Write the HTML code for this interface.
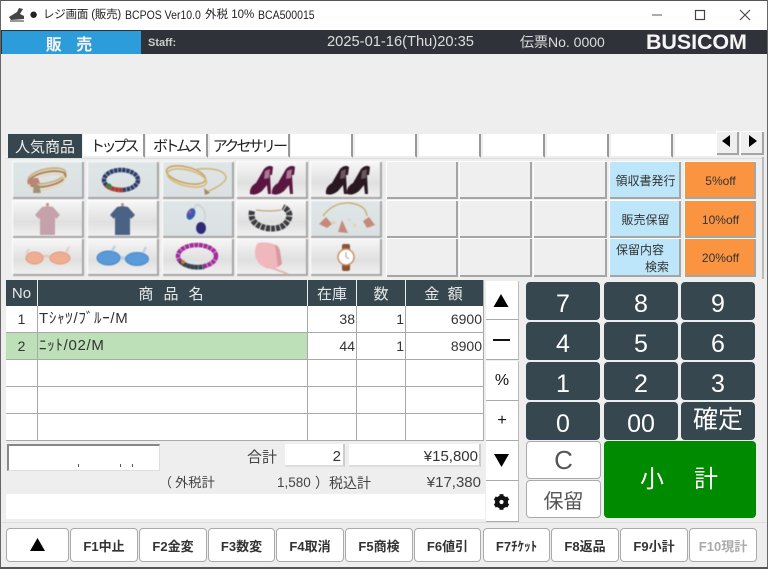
<!DOCTYPE html>
<html lang="ja"><head><meta charset="utf-8"><title>レジ画面</title>
<style>
html,body{margin:0;padding:0}
body{width:768px;height:569px;overflow:hidden;position:relative;background:#eee;font-family:"Liberation Sans","Noto Sans CJK JP",sans-serif;color:#333}
div{position:absolute;box-sizing:border-box;white-space:nowrap}
.c{display:flex;align-items:center;justify-content:center}
.tab{top:134px;height:24px;background:#fff;border-right:2px solid #999;border-bottom:2px solid #eee;font-size:15px;color:#222}
.gb{background:#efefef;border:1px solid #fff;border-width:1px 0 0 1px;box-shadow:inset -2px -2px 0 #a5a5a5}
.bl{background:#bde6fa;border-top:1px solid #fff;border-left:1px solid #fff;box-shadow:inset -2px -2px 0 #a5a5a5;font-size:12px;color:#333}
.or{background:#fb9440;border-top:1px solid #fff;border-left:1px solid #fff;box-shadow:inset -2px -2px 0 #a5a5a5;font-size:12px;color:#333}
.th{top:280px;height:26px;background:#37474f;color:#e8e8e8;font-size:15px}
.ln{background:#a9a9a9}
.cell{font-size:14px;color:#333;height:26px;line-height:26px}
.nm{font-size:15px;letter-spacing:.7px}
.r{text-align:right}
.sb{left:486px;width:33px;background:#fff;border-right:1px solid #bbb;border-bottom:1px solid #aaa;color:#111}
.np{background:#37474f;border-radius:4px;color:#fff;font-size:25px;line-height:44px;text-align:center;height:38px;width:74px}
.wb{background:#fff;border:1px solid #aaa;border-radius:4px;color:#555}
.fk{top:528px;height:34px;background:#fff;border:1px solid #aaa;border-radius:4px;font-size:13px;font-weight:bold;color:#333}
.t{top:7px;font-size:12px;line-height:16px;color:#222;transform-origin:left center}
</style></head><body>
<div style="left:0;top:0;width:768px;height:1px;background:#555"></div>
<div style="left:0;top:0;width:1px;height:569px;background:#666"></div>
<div style="left:767px;top:0;width:1px;height:569px;background:#666"></div>
<div style="left:1px;top:1px;width:766px;height:29px;background:#fff"></div>
<svg style="position:absolute;left:8px;top:7px" width="17" height="16" viewBox="0 0 17 16"><path d="M1 10L9 5 11 1 15 2 12 7 16 9 16 12 3 13z" fill="#444"/><path d="M2 13h14v2H2z" fill="#999"/></svg>
<div class="t" style="left:29px;font-size:15px">●</div>
<div class="t" style="left:43px;font-size:11.500px;letter-spacing:-.2px">レジ画面 (販売)</div>
<div class="t" style="left:125px;transform:scaleX(.875)">BCPOS Ver10.0</div>
<div class="t" style="left:205px;font-size:11.500px">外税 10%</div>
<div class="t" style="left:258px;transform:scaleX(.875)">BCA500015</div>
<svg style="position:absolute;left:650px;top:5px" width="110" height="18" viewBox="0 0 110 18" fill="none" stroke="#444"><path d="M2 10h10" stroke="#888" stroke-width="1.4"/><rect x="45.500" y="5.500" width="9" height="9" stroke-width="1.2"/><path d="M90 5l10 10M100 5l-10 10" stroke-width="1.1"/></svg>

<div style="left:1px;top:30px;width:766px;height:24px;background:#2f3239"></div>
<div class="c" style="left:2px;top:31px;width:139px;height:23px;background:#2d9cdb;color:#f4f4f4;font-size:16px;font-weight:bold;letter-spacing:5px">販 売</div>
<div style="left:148px;top:36px;font-size:11px;line-height:14px;color:#ccc;font-weight:bold">Staff:</div>
<div style="left:327px;top:34px;font-size:14.700px;line-height:17px;color:#ddd">2025-01-16(Thu)20:35</div>
<div style="left:520px;top:34px;font-size:14px;line-height:17px;color:#ddd">伝票No. 0000</div>
<div style="left:646px;top:30px;font-size:21.500px;line-height:24px;font-weight:bold;color:#f5f5f5;letter-spacing:-.1px">BUSICOM</div>

<div class="c tab" style="left:8px;width:74px;background:#37474f;color:#eee;border:0;height:25px">人気商品</div>
<div class="c tab" style="left:83px;width:62px;letter-spacing:-3.500px">トップス</div>
<div class="c tab" style="left:146px;width:62px;letter-spacing:-3.500px">ボトムス</div>
<div class="c tab" style="left:210px;width:80px;letter-spacing:-2.800px">アクセサリー</div>
<div class="tab" style="left:291px;width:62px"></div>
<div class="tab" style="left:355px;width:62px"></div>
<div class="tab" style="left:419px;width:62px"></div>
<div class="tab" style="left:483px;width:62px"></div>
<div class="tab" style="left:547px;width:62px"></div>
<div class="tab" style="left:611px;width:62px"></div>
<div class="tab" style="left:675px;width:42px;border-right:0"></div>
<div class="gb" style="left:716px;top:131px;width:23px;height:24px"></div>
<div class="gb" style="left:740px;top:131px;width:24px;height:24px"></div>
<svg style="position:absolute;left:716px;top:131px" width="48" height="24"><path d="M14 4v12l-8-6zM33 4v12l8-6z" fill="#000"/></svg>
<div style="left:6px;top:158px;width:756px;height:1px;background:#ddd"></div>
<div style="left:762px;top:157px;width:2px;height:122px;background:#bbb"></div>

<svg style="position:absolute;left:0;top:0;filter:blur(.4px)" width="768" height="569">
<defs>
<linearGradient id="a" x1="0" y1="0" x2="0" y2="1"><stop offset="0" stop-color="#dfe6e7"/><stop offset="1" stop-color="#dbe1e2"/></linearGradient>
<linearGradient id="b" x1="0" y1="0" x2="0" y2="1"><stop offset="0" stop-color="#f6f6f6"/><stop offset=".6" stop-color="#e0e0e0"/><stop offset="1" stop-color="#f0f0f0"/></linearGradient>
<g id="ca"><rect width="72" height="38" fill="#fff"/><rect x="1" y="1" width="71" height="37" fill="#a5a5a5"/><rect x="1" y="1" width="69" height="35" fill="url(#a)"/></g>
<g id="cb"><rect width="72" height="38" fill="#fff"/><rect x="1" y="1" width="71" height="37" fill="#a5a5a5"/><rect x="1" y="1" width="69" height="35" fill="url(#b)"/></g>
<path id="sh" d="M14 33Q13 26 20 22L28 8Q33 3 37 6L36 14 34 14 35 33H32L31 24 26 30Q20 35 14 33Z"/>
<path id="ts" d="M30 7L35.500 6 41 7 48 15 44 19 43 17V35H28V17L27 19 23 15Z"/>
</defs>
<!-- row 1 -->
<g transform="translate(12,161)"><use href="#ca"/><g fill="none" stroke-width="1.800"><ellipse cx="35" cy="15" rx="19" ry="7" transform="rotate(-12 35 15)" stroke="#cfae78"/><ellipse cx="35" cy="18" rx="19" ry="7" transform="rotate(-12 35 18)" stroke="#a87a58"/><ellipse cx="35" cy="21" rx="18" ry="7" transform="rotate(-12 35 21)" stroke="#e6d8b8"/></g><path d="M15 19l7-2 4 0 2 5-4 1-1 2-6-2z" fill="#bb8474"/><path d="M22 23l5 1 2 8-8 0z" fill="#a09078"/></g>
<g transform="translate(87,161)"><use href="#ca"/><ellipse cx="34" cy="19" rx="17" ry="10" fill="none" stroke="#2b3c68" stroke-width="4.500" stroke-dasharray="3.500 .6"/><path d="M19 24q5 5 17 5" fill="none" stroke="#c8452e" stroke-width="4.500" stroke-dasharray="3.500 .6"/><circle cx="22" cy="25" r="2.500" fill="#2a8a4a"/></g>
<g transform="translate(162,161)"><use href="#ca"/><g fill="none" stroke="#c9a25f" stroke-width="1.600"><ellipse cx="24" cy="14" rx="20" ry="8" transform="rotate(14 24 14)"/><ellipse cx="25" cy="17" rx="20" ry="8" transform="rotate(14 25 17)" stroke="#d8b878"/><path d="M35 8q26-2 29 8 1 6-19 15" stroke="#d3b67a"/></g><path d="M42 27l6 5-5 2z" fill="#a08b5f"/></g>
<g transform="translate(236,161)"><use href="#cb"/><use href="#sh" fill="#5a1640"/><use href="#sh" x="22" fill="#5a1640"/><path d="M29 10l5-2-1 9-5 1zM51 10l5-2-1 9-5 1z" fill="#a87a98"/></g>
<g transform="translate(310,161)"><use href="#cb"/><use href="#sh" x="2" fill="#2a1820"/><use href="#sh" x="23" fill="#2a1820"/><path d="M31 10l5-2-1 9-5 1zM52 10l5-2-1 9-5 1z" fill="#6a5860"/></g>
<!-- row 2 -->
<g transform="translate(12,200)"><use href="#cb"/><use href="#ts" fill="#c4a1ab"/><circle cx="35.500" cy="4.500" r="1.500" fill="#c09070"/></g>
<g transform="translate(87,200)"><use href="#cb"/><use href="#ts" fill="#4a6283"/><circle cx="35.500" cy="4.500" r="1.500" fill="#c09070"/></g>
<g transform="translate(162,200)"><use href="#ca"/><ellipse cx="29" cy="14" rx="4" ry="6" fill="#3a5ab0" transform="rotate(25 29 14)"/><ellipse cx="39" cy="28" rx="5" ry="6" fill="#302878"/><circle cx="28" cy="12" r="1.500" fill="#b050a0"/><path d="M32 9q2-6 5-4M42 21q3-6-1-12-3-5-5-3" fill="none" stroke="#c4c8cc"/></g>
<g transform="translate(236,200)"><use href="#cb"/><path d="M16 11Q13 24 30 28 48 31 53 18 55 11 47 7" fill="none" stroke="#3c3c40" stroke-width="6" stroke-dasharray="4 1"/><path d="M20 10q14 2 25 0" stroke="#b8945a" fill="none"/></g>
<g transform="translate(310,200)"><use href="#ca"/><path d="M13 16q10-14 27-13 16 2 17 13" fill="none" stroke="#c9a25f" stroke-width="1.200"/><path d="M9 24l7-7 6 7-5 4zM28 32l4-12 6 13zM53 21l6-4 6 8-8 3z" fill="#c78a78"/><path d="M22 20l5 3-5 1zM43 23l4 2-3 3zM38 18l3 2-2 2z" fill="#e0d0b0"/></g>
<!-- row 3 -->
<g transform="translate(12,238)"><use href="#cb"/><path d="M30 19q4-2 9 0" stroke="#e8c8bc" stroke-width="2.500" fill="none"/><ellipse cx="22.500" cy="20" rx="8.500" ry="6" fill="#efae92" stroke="#e09a80"/><ellipse cx="48" cy="20" rx="10" ry="6" fill="#efae92" stroke="#e09a80"/><path d="M14 16l3-5M54 15l3-6" stroke="#e8d0c8" stroke-width="2.500"/></g>
<g transform="translate(87,238)"><use href="#cb"/><path d="M32 19q4 1 7 2" stroke="#b8cfe8" stroke-width="3" fill="none"/><ellipse cx="21.500" cy="20" rx="11.500" ry="7" fill="#5a9ad8" stroke="#4a86c8"/><ellipse cx="50" cy="21" rx="11.500" ry="6.500" fill="#5a9ad8" stroke="#4a86c8"/><path d="M56 15l3-6M25 13l3-5" stroke="#b8cfe8" stroke-width="2.500"/></g>
<g transform="translate(162,238)"><use href="#cb"/><ellipse cx="35" cy="18" rx="19" ry="11" fill="none" stroke="#a32b9a" stroke-width="4.500" stroke-dasharray="4 .6"/><path d="M18 23q8 8 24 6" fill="none" stroke="#2a4a48" stroke-width="4.500" stroke-dasharray="3.500 .6"/><circle cx="21" cy="24" r="2" fill="#c87a30"/></g>
<g transform="translate(236,238)"><use href="#cb"/><path d="M22 5Q32 3 42 8L45 24Q44 30 36 31L30 30Q20 26 19 16 19 8 22 5Z" fill="#f0b8bc"/><path d="M39 7q4 1 5 6l2 13-4 3z" fill="#d89aa0"/><path d="M36 30l16 6" stroke="#e8b4b0" stroke-width="2"/></g>
<g transform="translate(310,238)"><use href="#cb"/><rect x="32" y="6" width="8" height="27" rx="2" fill="#8a5238"/><circle cx="36" cy="19" r="8" fill="#fff" stroke="#c89060" stroke-width="1.500"/><path d="M36 19v-5M36 19l3 2" stroke="#777" stroke-width=".7"/></g>
</svg>
<!-- empty buttons -->
<div class="gb" style="left:386px;top:161px;width:72px;height:38px"></div>
<div class="gb" style="left:459px;top:161px;width:73px;height:38px"></div>
<div class="gb" style="left:533px;top:161px;width:74px;height:38px"></div>
<div class="gb" style="left:386px;top:200px;width:72px;height:38px"></div>
<div class="gb" style="left:459px;top:200px;width:73px;height:38px"></div>
<div class="gb" style="left:533px;top:200px;width:74px;height:38px"></div>
<div class="gb" style="left:386px;top:238px;width:72px;height:39px"></div>
<div class="gb" style="left:459px;top:238px;width:73px;height:39px"></div>
<div class="gb" style="left:533px;top:238px;width:74px;height:39px"></div>
<div class="bl c" style="left:609px;top:161px;width:72px;height:38px">領収書発行</div>
<div class="bl c" style="left:609px;top:200px;width:72px;height:38px">販売保留</div>
<div class="bl" style="left:609px;top:238px;width:72px;height:39px"><div style="left:6px;top:3px;line-height:16px">保留内容</div><div style="left:35px;top:20px;line-height:16px">検索</div></div>
<div class="or c" style="left:684px;top:161px;width:72px;height:38px">5%off</div>
<div class="or c" style="left:684px;top:200px;width:72px;height:38px">10%off</div>
<div class="or c" style="left:684px;top:238px;width:72px;height:39px">20%off</div>

<!-- table -->
<div style="left:6px;top:306px;width:477px;height:135px;background:#fff"></div>
<div style="left:6px;top:333px;width:301px;height:26px;background:#bde0b9"></div>
<div class="th c" style="left:6px;width:31px">No</div>
<div class="th c" style="left:38px;width:269px;letter-spacing:3px">商 品 名</div>
<div class="th c" style="left:308px;width:48px">在庫</div>
<div class="th c" style="left:357px;width:48px">数</div>
<div class="th c" style="left:406px;width:77px;letter-spacing:2px">金 額</div>
<div class="ln" style="left:6px;top:332px;width:477px;height:1px"></div>
<div class="ln" style="left:6px;top:359px;width:477px;height:1px"></div>
<div class="ln" style="left:6px;top:386px;width:477px;height:1px"></div>
<div class="ln" style="left:6px;top:413px;width:477px;height:1px"></div>
<div class="ln" style="left:6px;top:440px;width:477px;height:1px"></div>
<div class="ln" style="left:37px;top:306px;width:1px;height:135px"></div>
<div class="ln" style="left:307px;top:306px;width:1px;height:135px"></div>
<div class="ln" style="left:356px;top:306px;width:1px;height:135px"></div>
<div class="ln" style="left:405px;top:306px;width:1px;height:135px"></div>
<div class="ln" style="left:483px;top:280px;width:1px;height:161px"></div>
<div class="cell" style="left:6px;top:306px;width:31px;text-align:center">1</div>
<div class="cell nm" style="left:39px;top:306px">Tｼｬﾂ/ﾌﾞﾙｰ/M</div>
<div class="cell r" style="left:308px;top:306px;width:47px">38</div>
<div class="cell r" style="left:357px;top:306px;width:47px">1</div>
<div class="cell r" style="left:406px;top:306px;width:76px">6900</div>
<div class="cell" style="left:6px;top:333px;width:31px;text-align:center">2</div>
<div class="cell nm" style="left:39px;top:333px">ﾆｯﾄ/02/M</div>
<div class="cell r" style="left:308px;top:333px;width:47px">44</div>
<div class="cell r" style="left:357px;top:333px;width:47px">1</div>
<div class="cell r" style="left:406px;top:333px;width:76px">8900</div>

<!-- side buttons -->
<div class="sb" style="top:281px;height:39px"></div>
<div class="sb" style="top:320px;height:40px"></div>
<div class="sb c" style="top:361px;height:40px;font-size:16px">%</div>
<div class="sb c" style="top:401px;height:40px;font-size:16px">+</div>
<div class="sb" style="top:441px;height:40px"></div>
<div class="sb" style="top:481px;height:41px"></div>
<svg style="position:absolute;left:486px;top:281px" width="33" height="241"><path d="M7.500 26L15 13 22.500 26z" fill="#000"/><path d="M7 59h17" stroke="#111" stroke-width="2"/><path d="M8 173L15.500 186 23 173z" fill="#000"/><g transform="translate(15.500,221)"><circle r="4.300" fill="none" stroke="#111" stroke-width="4.400"/><g fill="#111"><rect x="-2" y="-7.800" width="4" height="3.500"/><rect x="-2" y="-7.800" width="4" height="3.500" transform="rotate(60)"/><rect x="-2" y="-7.800" width="4" height="3.500" transform="rotate(120)"/><rect x="-2" y="-7.800" width="4" height="3.500" transform="rotate(180)"/><rect x="-2" y="-7.800" width="4" height="3.500" transform="rotate(240)"/><rect x="-2" y="-7.800" width="4" height="3.500" transform="rotate(300)"/></g></g></svg>

<!-- numpad -->
<div class="np" style="left:526px;top:282px">7</div><div class="np" style="left:604px;top:282px">8</div><div class="np" style="left:681px;top:282px">9</div>
<div class="np" style="left:526px;top:322px">4</div><div class="np" style="left:604px;top:322px">5</div><div class="np" style="left:681px;top:322px">6</div>
<div class="np" style="left:526px;top:362px">1</div><div class="np" style="left:604px;top:362px">2</div><div class="np" style="left:681px;top:362px">3</div>
<div class="np" style="left:526px;top:402px">0</div><div class="np" style="left:604px;top:402px">00</div><div class="np" style="left:681px;top:402px;font-size:25px;line-height:36px">確定</div>
<div class="wb c" style="left:526px;top:441px;width:75px;height:38px;font-size:26px">C</div>
<div class="wb c" style="left:526px;top:480px;width:75px;height:38px;font-size:20px">保留</div>
<div style="left:604px;top:441px;width:152px;height:77px;background:#008a00;border-radius:4px;color:#fff;font-size:24px;line-height:30px"><div style="left:36px;top:24px">小</div><div style="left:90px;top:24px">計</div></div>

<!-- totals -->
<div style="left:7px;top:444px;width:153px;height:27px;background:#fff;border:1px solid #ddd;border-top:2px solid #888;border-left:2px solid #888"></div>
<div style="left:78px;top:464px;width:1px;height:3px;background:#555"></div>
<div style="left:120px;top:464px;width:1px;height:3px;background:#555"></div>
<div style="left:132px;top:464px;width:1px;height:3px;background:#555"></div>
<div style="left:247px;top:449px;font-size:15px;line-height:18px;color:#444">合計</div>
<div style="left:285px;top:444px;width:60px;height:23px;background:#fff;border-right:2px solid #ccc;border-bottom:2px solid #ddd;font-size:15px;line-height:25px;text-align:right;padding-right:2px">2</div>
<div style="left:349px;top:444px;width:132px;height:23px;background:#fff;border-right:2px solid #ccc;border-bottom:2px solid #ddd;font-size:15px;line-height:25px;text-align:right;padding-right:1px">¥15,800</div>
<div style="left:159px;top:474px;font-size:13px;line-height:18px;color:#444">（</div>
<div style="left:175px;top:474px;font-size:13.300px;line-height:18px;color:#444">外税計</div>
<div style="left:277px;top:474px;font-size:13.500px;line-height:18px;color:#444">1,580</div>
<div style="left:315px;top:474px;font-size:14px;line-height:18px;color:#444">）税込計</div>
<div style="left:420px;top:474px;width:61px;font-size:15px;line-height:18px;text-align:right;color:#444">¥17,380</div>
<div style="left:6px;top:494px;width:479px;height:25px;background:#fff"></div>

<!-- function keys -->
<div style="left:1px;top:522px;width:766px;height:1px;background:#ddd"></div>
<div class="fk" style="left:6px;width:63px"></div>
<svg style="position:absolute;left:6px;top:528px" width="63" height="34"><path d="M24 23L31.500 10 39 23z" fill="#000"/></svg>
<div class="fk c" style="left:70px;width:68px">F1中止</div>
<div class="fk c" style="left:139px;width:68px">F2金変</div>
<div class="fk c" style="left:208px;width:67px">F3数変</div>
<div class="fk c" style="left:276px;width:68px">F4取消</div>
<div class="fk c" style="left:345px;width:68px">F5商検</div>
<div class="fk c" style="left:414px;width:67px">F6値引</div>
<div class="fk c" style="left:483px;width:67px">F7ﾁｹｯﾄ</div>
<div class="fk c" style="left:551px;width:68px">F8返品</div>
<div class="fk c" style="left:620px;width:68px">F9小計</div>
<div class="fk c" style="left:689px;width:68px;color:#aaa">F10現計</div>
<div style="left:0;top:567px;width:768px;height:2px;background:#555"></div>
</body></html>
